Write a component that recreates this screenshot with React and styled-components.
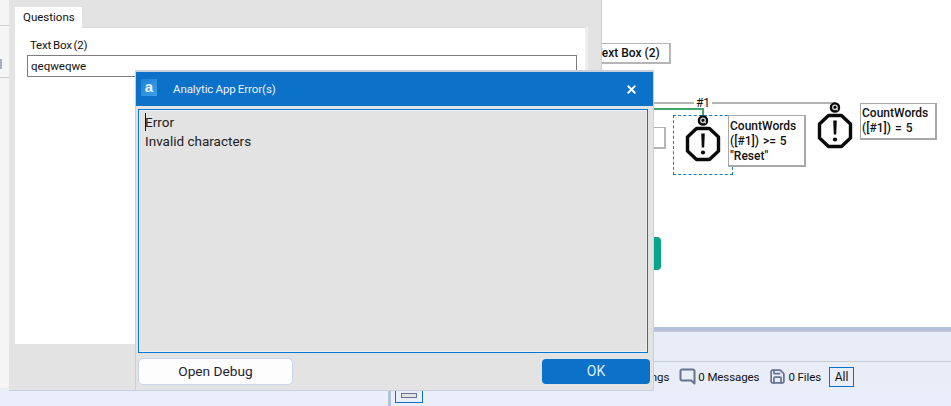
import React from 'react';
import styled, { createGlobalStyle } from 'styled-components';
import { X, Save } from 'lucide-react';

const UI_FONT = '"Roboto", "Open Sans", "Liberation Sans", sans-serif';

function Warning({ size = 36 }) {
  return (
    <svg width={size} height={size} viewBox="0 0 36 36">
      <polygon
        points="11.5,2.5 24.5,2.5 33.5,11 33.5,25 24.5,33.5 11.5,33.5 2.5,25 2.5,11"
        fill="#fff"
        stroke="#0a0a0a"
        strokeWidth="3.4"
        strokeLinejoin="round"
      />
      <path d="M16.2 7.5h3.6l-.6 14h-2.4z" fill="#0a0a0a" />
      <circle cx="18" cy="26.5" r="2.1" fill="#0a0a0a" />
    </svg>
  );
}

function QBadge() {
  return (
    <svg width="11" height="11" viewBox="0 0 12 12">
      <circle cx="6" cy="6" r="5.8" fill="#0a0a0a" />
      <circle cx="6" cy="5.8" r="2.5" fill="none" stroke="#d8d8d8" strokeWidth="1.4" />
      <path d="M7 7l2 2" stroke="#d8d8d8" strokeWidth="1.2" />
    </svg>
  );
}

function CommentIcon() {
  return (
    <svg width="17" height="17" viewBox="0 0 17 17" fill="none">
      <path
        d="M3 1.5h11a1.5 1.5 0 0 1 1.5 1.5v12.5l-3.2-3H3A1.5 1.5 0 0 1 1.5 11V3A1.5 1.5 0 0 1 3 1.5z"
        stroke="#67738f"
        strokeWidth="2"
        strokeLinejoin="round"
      />
    </svg>
  );
}

function AlteryxLogo() {
  return <LogoMark>a</LogoMark>;
}

export default function App() {
  return (
    <Page>
      <GlobalStyle />
      <Workspace>
        <Canvas>
          <TitleNode>Text Box (2)</TitleNode>
          <GreyWire />
          <WireLabel>#1</WireLabel>
          <GreenWire />
          <HiddenBox />
          <TealTool />

          <SelectedTool>
            <BadgeSlot><QBadge /></BadgeSlot>
            <Warning />
          </SelectedTool>
          <ToolNote $left={728} $top={115} $width={78} $height={52} $padTop={3}>
            CountWords
            <br />
            ([#1]) &gt;= 5
            <br />
            "Reset"
          </ToolNote>

          <PlainTool>
            <BadgeSlot><QBadge /></BadgeSlot>
            <Warning />
          </PlainTool>
          <ToolNote $left={860} $top={103} $width={77} $height={37} $padTop={2}>
            CountWords
            <br />
            ([#1]) = 5
          </ToolNote>
        </Canvas>
        <Splitter />
        <ResultsHead />
        <StatusRow>
          <StatusText>ngs</StatusText>
          <StatusItem>
            <CommentIcon />
            <StatusText>0 Messages</StatusText>
          </StatusItem>
          <StatusItem>
            <Save size={17} color="#67738f" strokeWidth={2.4} />
            <StatusText>0 Files</StatusText>
          </StatusItem>
          <AllButton>All</AllButton>
        </StatusRow>
        <BottomStrip>
          <StripDivider />
          <StripTab>
            <StripGlyph />
          </StripTab>
        </BottomStrip>
      </Workspace>

      <SideRail>
        <RailLine />
        <RailTick />
        <RailLine />
      </SideRail>

      <QuestionsWindow>
        <TabBar>
          <Tab>Questions</Tab>
        </TabBar>
        <TabPanel>
          <FieldLabel>Text Box (2)</FieldLabel>
          <FieldInput readOnly value="qeqweqwe" />
        </TabPanel>
      </QuestionsWindow>

      <Dialog>
        <DialogTitle>
          <AlteryxLogo />
          <TitleText>Analytic App Error(s)</TitleText>
          <CloseButton>
            <X size={13} strokeWidth={3.4} color="#fff" />
          </CloseButton>
        </DialogTitle>
        <ErrorBox>
          <Caret />
          Error
          <br />
          Invalid characters
        </ErrorBox>
        <DialogButtons>
          <DebugButton>Open Debug</DebugButton>
          <OkButton>OK</OkButton>
        </DialogButtons>
      </Dialog>
    </Page>
  );
}

const GlobalStyle = createGlobalStyle`
  html, body {
    margin: 0;
    padding: 0;
    background: #fff;
  }
  * {
    box-sizing: border-box;
  }
`;

const Page = styled.div`
  position: relative;
  width: 951px;
  height: 406px;
  overflow: hidden;
  font-family: ${UI_FONT};
  font-size: 12px;
  color: #111;
`;

const Workspace = styled.div`
  display: flex;
  flex-direction: column;
  width: 100%;
  height: 100%;
`;

const Canvas = styled.div`
  position: relative;
  height: 327px;
  background: #fff;
`;

const TitleNode = styled.div`
  position: absolute;
  left: 590px;
  top: 43px;
  width: 81px;
  height: 21px;
  padding-left: 4px;
  border: 1px solid #b5b5b5;
  border-right-width: 2px;
  border-bottom-width: 2px;
  font-size: 12px;
  font-weight: 500;
  line-height: 19px;
  white-space: nowrap;
`;

const GreyWire = styled.div`
  position: absolute;
  left: 650px;
  top: 102px;
  width: 186px;
  height: 2px;
  background: #b3b3b3;
`;

const WireLabel = styled.div`
  position: absolute;
  left: 694px;
  top: 96px;
  width: 18px;
  background: #fff;
  text-align: center;
  font-size: 12px;
  line-height: 14px;
`;

const GreenWire = styled.div`
  position: absolute;
  left: 650px;
  top: 108px;
  width: 54px;
  height: 8px;
  border-top: 2px solid #43a667;
  border-right: 2px solid #43a667;
`;

const HiddenBox = styled.div`
  position: absolute;
  left: 640px;
  top: 127px;
  width: 26px;
  height: 22px;
  border: 1px solid #b5b5b5;
  border-right-width: 2px;
  border-bottom-width: 2px;
`;

const TealTool = styled.div`
  position: absolute;
  left: 640px;
  top: 237px;
  width: 21px;
  height: 33px;
  border-radius: 4px;
  background: #07a58d;
`;

const SelectedTool = styled.div`
  position: absolute;
  left: 673px;
  top: 115px;
  width: 60px;
  height: 60px;
  padding-top: 10px;
  padding-left: 11px;
  border: 1px dashed #1a78c8;
`;

const PlainTool = styled.div`
  position: absolute;
  left: 817px;
  top: 103px;
  width: 36px;
  padding-top: 10px;
`;

const BadgeSlot = styled.div`
  position: absolute;
  left: 50%;
  top: -1px;
  display: flex;
  transform: translateX(-50%);
`;

const ToolNote = styled.div`
  position: absolute;
  left: ${(props) => props.$left}px;
  top: ${(props) => props.$top}px;
  width: ${(props) => props.$width}px;
  height: ${(props) => props.$height}px;
  padding: ${(props) => props.$padTop}px 0 0 1px;
  background: #fff;
  border: 1px solid #a8a8a8;
  border-right-width: 2px;
  border-bottom-width: 2px;
  font-size: 12px;
  font-weight: 500;
  word-spacing: 1px;
  line-height: 15px;
  white-space: nowrap;
`;

const Splitter = styled.div`
  height: 4px;
  background: #b4c0dc;
`;

const ResultsHead = styled.div`
  height: 31px;
  background: #e9edf8;
  border-top: 1px solid #c9ccd4;
  border-bottom: 1px solid #c9ccd4;
`;

const StatusRow = styled.div`
  display: flex;
  align-items: center;
  justify-content: flex-end;
  gap: 8px;
  height: 29px;
  padding-right: 97px;
  background: #e9edf8;
`;

const StatusItem = styled.div`
  display: flex;
  align-items: center;
  gap: 2px;
  margin-left: 2px;
`;

const StatusText = styled.span`
  font-size: 11.5px;
  letter-spacing: -0.1px;
  line-height: 16px;
`;

const AllButton = styled.div`
  width: 25px;
  height: 20px;
  border: 1px solid #0c71c9;
  text-align: center;
  font-size: 12px;
  line-height: 18px;
`;

const BottomStrip = styled.div`
  display: flex;
  flex: 1;
  padding-left: 388px;
  background: #eaeefa;
`;

const StripDivider = styled.div`
  width: 3px;
  background: #b4c0dc;
`;

const StripTab = styled.div`
  display: flex;
  align-items: flex-start;
  justify-content: center;
  width: 28px;
  height: 12px;
  margin-left: 4px;
  border: 1px solid #0c71c9;
  border-top: none;
`;

const StripGlyph = styled.div`
  width: 16px;
  height: 5px;
  margin-top: 2px;
  background: #e3e3e3;
  border: 1px solid #67738f;
`;

const SideRail = styled.div`
  position: absolute;
  left: 0;
  top: 0;
  display: flex;
  flex-direction: column;
  width: 9px;
  height: 388px;
  padding-top: 25px;
  background: #f5f5f5;
  border-bottom-right-radius: 4px;
`;

const RailLine = styled.div`
  height: 1px;
  background: #cfcfcf;
  margin-bottom: 33px;
`;

const RailTick = styled.div`
  width: 2px;
  height: 10px;
  margin-bottom: 8px;
  background: #a9b0bd;
`;

const QuestionsWindow = styled.div`
  position: absolute;
  left: 9px;
  top: 0;
  display: flex;
  flex-direction: column;
  width: 593px;
  height: 391px;
  padding: 7px 16px 46px 6px;
  background: #e3e3e3;
  border-right: 1px solid #c8cdd8;
  border-bottom: 1px solid #c5cfe4;
`;

const TabBar = styled.div`
  display: flex;
  height: 20px;
`;

const Tab = styled.div`
  width: 67px;
  height: 21px;
  padding-left: 8px;
  background: #fff;
  font-size: 11.5px;
  line-height: 20px;
  position: relative;
  z-index: 1;
`;

const TabPanel = styled.div`
  flex: 1;
  padding: 9px 8px 0 12px;
  background: #fff;
  border-top: 1px solid #d6d6d6;
  box-shadow: 3px 0 0 #eeeeee;
`;

const FieldLabel = styled.div`
  margin: 0 0 2px 3px;
  font-size: 11.5px;
  letter-spacing: -0.2px;
  word-spacing: -0.8px;
  line-height: 16px;
`;

const FieldInput = styled.input`
  display: block;
  width: 550px;
  height: 22px;
  padding: 0 3px;
  border: 1px solid #7d7d7d;
  outline: none;
  background: #fff;
  font-family: ${UI_FONT};
  font-size: 11.5px;
  color: #111;
`;

const Dialog = styled.div`
  position: absolute;
  left: 135px;
  top: 70px;
  display: flex;
  flex-direction: column;
  width: 519px;
  height: 321px;
  padding: 0 2px;
  background: #e3e3e3;
  border: 1px solid #c8cfdf;
  border-top-width: 2px;
`;

const DialogTitle = styled.div`
  display: flex;
  align-items: center;
  height: 34px;
  margin: 0 -2px;
  padding: 0 15px 0 5px;
  background: #0c71c9;
`;

const LogoMark = styled.div`
  width: 16px;
  height: 17px;
  margin-top: -4px;
  background: linear-gradient(135deg, #1a83d8, #3f9fe8);
  color: #e8f3fc;
  font-family: "Liberation Sans", sans-serif;
  font-size: 15px;
  font-weight: 700;
  line-height: 15px;
  text-align: center;
`;

const TitleText = styled.div`
  flex: 1;
  margin-left: 16px;
  color: #e9f2fb;
  font-size: 11.5px;
  letter-spacing: -0.08px;
  word-spacing: -0.6px;
`;

const CloseButton = styled.div`
  display: flex;
`;

const ErrorBox = styled.div`
  position: relative;
  height: 244px;
  margin: 3px 3px 0 0;
  padding: 3px 6px;
  background: #e3e3e3;
  border: 1px solid #0078d7;
  box-shadow: inset 0 0 0 1px #f0f0f0;
  font-size: 13.5px;
  line-height: 19px;
  color: #222;
`;

const Caret = styled.span`
  position: absolute;
  left: 6px;
  top: 3px;
  width: 1px;
  height: 18px;
  background: #111;
`;

const DialogButtons = styled.div`
  display: flex;
  align-items: center;
  justify-content: space-between;
  flex: 1;
  padding: 0 1px 0 0;
`;

const DebugButton = styled.div`
  width: 155px;
  height: 27px;
  border: 1px solid #c9d4ea;
  border-radius: 5px;
  background: #fdfdfd;
  text-align: center;
  font-size: 13.7px;
  line-height: 25px;
  color: #1b2233;
`;

const OkButton = styled.div`
  width: 108px;
  height: 25px;
  border-radius: 4px;
  background: #0c71c9;
  text-align: center;
  font-size: 14px;
  line-height: 25px;
  color: #dcebf8;
`;
